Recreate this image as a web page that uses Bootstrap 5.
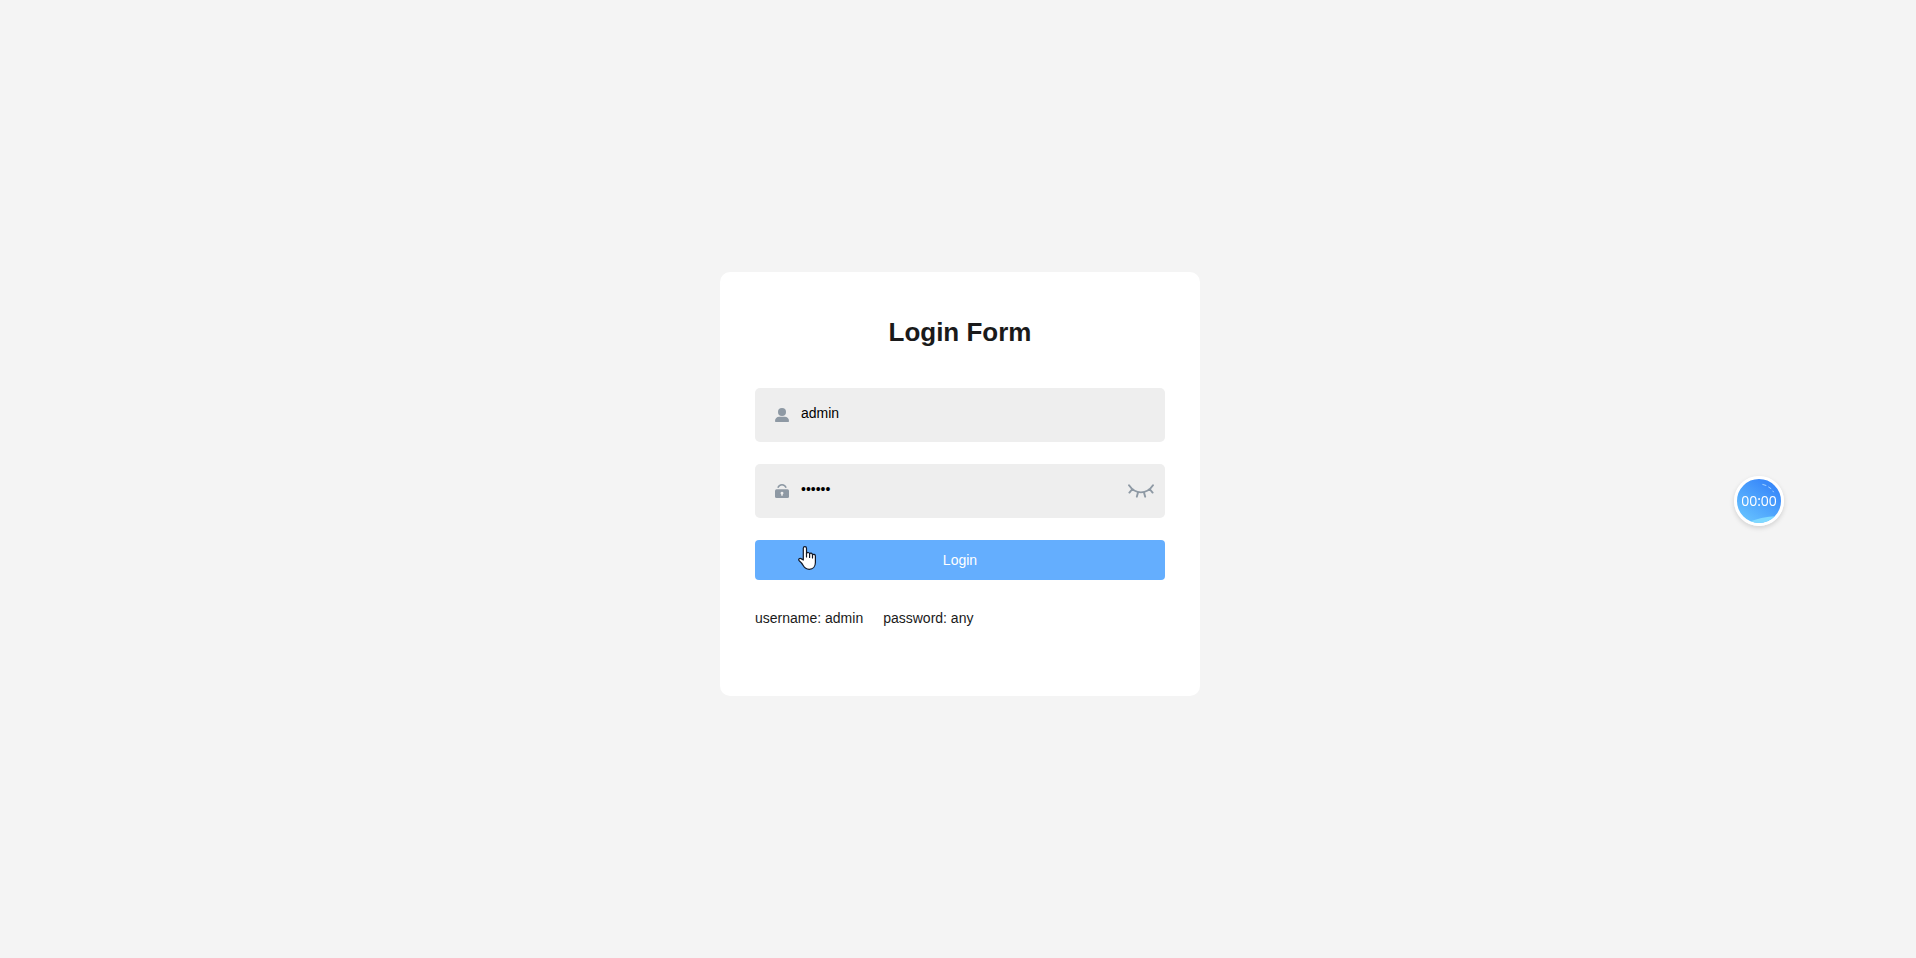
<!DOCTYPE html>
<html lang="en">
<head>
<meta charset="utf-8">
<meta name="viewport" content="width=device-width, initial-scale=1">
<title>Login Form</title>
<link href="https://cdn.jsdelivr.net/npm/bootstrap@5.3.0/dist/css/bootstrap.min.css" rel="stylesheet">
<style>
  body { background: #f4f4f4; color: #1a1a1a; font-family: "Liberation Sans", Arial, sans-serif; font-size: 14px; line-height: 20px; }
  .login-page { padding: 10px 0 0 4px; }
  .login-card { width: 100%; max-width: 480px; padding: 35px 35px 68px; border-radius: 10px; }
  .login-title { font-size: 26px; line-height: 30px; margin: 10px 0 41px; }
  .login-fields { gap: 22px; }
  .field-box { height: 54px; padding: 0 10px 0 20px; background: #eee; border-radius: 5px; color: #8e99a4; }
  .field-input, .field-input:focus { height: 50px; padding: 0 12px; background: transparent; border: 0; box-shadow: none; color: #000; font-size: 14px; line-height: 20px; }
  .login-btn, .login-btn:hover { height: 40px; padding: 0; background: #64aefe; border: 0; border-radius: 4px; color: #fff; font-size: 14px; line-height: 20px; }
  .hints { gap: 20px; margin-top: 28px; }
  .hand-pointer { left: 43px; top: 6px; pointer-events: none; }
  .timer { right: 132px; top: 476px; width: 50px; height: 50px; border: 3px solid #fff; background: linear-gradient(35deg, #66c2ff 10%, #3a8afa 80%); box-shadow: 0 2px 5px rgba(0,0,0,.15); font-family: "Open Sans", "Noto Sans", sans-serif; color: #fff; }
</style>
</head>
<body>
<main class="login-page min-vh-100 d-flex align-items-center justify-content-center">
  <section class="login-card bg-white">
    <h1 class="login-title text-center fw-bold">Login Form</h1>
    <form class="login-fields d-flex flex-column">
      <div class="field-box d-flex align-items-center">
        <label for="username" class="d-flex" aria-label="Username">
          <svg width="14" height="14" viewBox="0 0 14 14" fill="currentColor"><circle cx="7" cy="4" r="4"/><path d="M0 13.2C0 10.6 1.8 8.8 4.200 8.800H9.800C12.200 8.800 14 10.600 14 13.200Q14 14 13.200 14H.8Q0 14 0 13.200Z"/></svg>
        </label>
        <input id="username" class="field-input form-control align-self-start" type="text" value="admin">
      </div>
      <div class="field-box d-flex align-items-center">
        <label for="password" class="d-flex" aria-label="Password">
          <svg width="14" height="14" viewBox="0 0 14 14"><path d="M2.900 3.800C3.600 1.800 5.100.8 7 .8S10.400 1.800 11.100 3.800" fill="none" stroke="currentColor" stroke-width="1.500"/><path d="M1.500 5.300h11Q14 5.300 14 6.800v5.700q0 1.500-1.500 1.500h-11Q0 14 0 12.500V6.800Q0 5.300 1.500 5.300Z" fill="currentColor"/><path d="M7 7.700a1.500 1.500 0 0 1 .7 2.800v1.200H6.300v-1.200A1.500 1.500 0 0 1 7 7.700Z" fill="#eee"/></svg>
        </label>
        <input id="password" class="field-input form-control align-self-start" type="password" value="123456">
        <button type="button" class="btn p-0 border-0 d-flex text-reset" aria-label="Show password">
          <svg width="28" height="14" viewBox="0 0 28 14" fill="none" stroke="currentColor" stroke-width="1.900" stroke-linecap="round"><path d="M2 1.300C5 5.800 9 8.400 14 8.400S23 5.800 26 1.300M5.400 5 2.400 8.600M11 8.400 9.800 12.700M17 8.400l1.200 4.300M22.600 5l3 3.600"/></svg>
        </button>
      </div>
      <button type="submit" class="login-btn btn w-100 position-relative">Login
        <svg class="hand-pointer position-absolute" width="18" height="24" viewBox="0 0 18 24" fill="#fff" stroke="#111827" stroke-width="1.200" stroke-linejoin="round" stroke-linecap="round"><path d="M5.300 14V2.200Q5.300.7 6.900.7T8.500 2.200V8Q8.800 6.300 10.200 6.500T11.600 8Q12 6.900 13.200 7.200T14.500 8.900Q15.200 8 16.300 8.400T17.400 10V16.500C17.400 20.500 15 23.300 11.300 23.300C8 23.300 6.400 21.800 5.200 19.500C4 17.200 2.600 15.800 1.200 14.700C0 13.500 1.400 12 3 12.600C4 13 4.600 13.500 5.300 14Z"/><path d="M8.500 7.500V11M11.600 8V11.500M14.500 9V12"/></svg>
      </button>
    </form>
    <div class="hints d-flex">
      <span>username: admin</span>
      <span>password: any</span>
    </div>
  </section>
</main>
<div class="timer position-fixed rounded-circle d-flex align-items-center justify-content-center">
  <svg class="position-absolute top-0 start-0 w-100 h-100 rounded-circle" viewBox="0 0 45 45" fill="none"><path d="M9 45Q17 42 25 40T39 38L34 45Z" fill="#7fd9ff"/><path d="M26 5.500l4 1.200M32 8l3 2M36.500 12l1 1.500" stroke="#a6d4ff" stroke-width="1"/></svg>
  <span class="position-relative">00:00</span>
</div>
<script src="https://cdn.jsdelivr.net/npm/bootstrap@5.3.0/dist/js/bootstrap.bundle.min.js"></script>
</body>
</html>
